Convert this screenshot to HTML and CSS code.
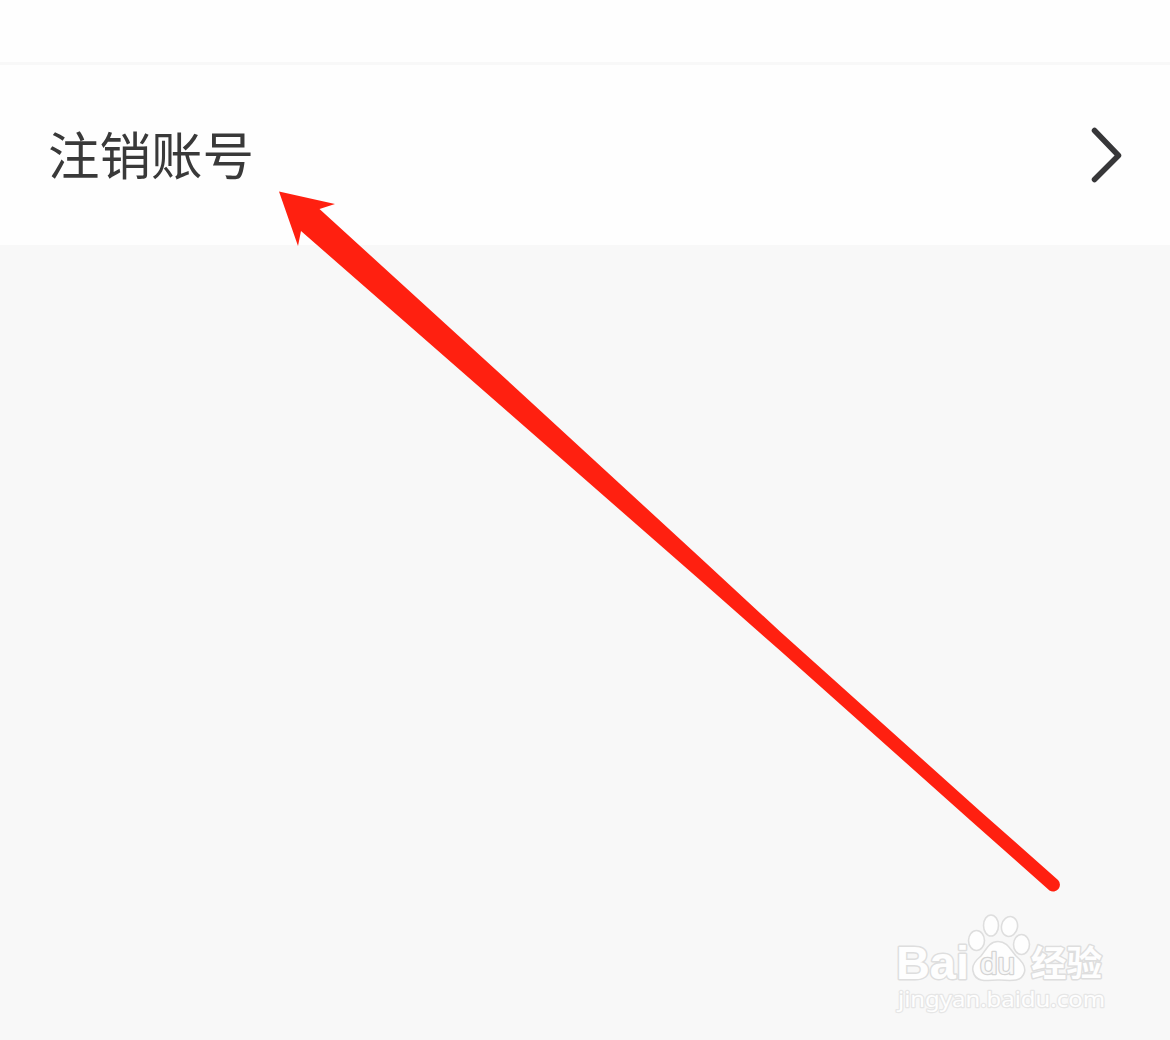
FILE: index.html
```
<!DOCTYPE html>
<html lang="zh-CN">
<head>
  <meta charset="UTF-8" />
  <title>注销账号</title>
  <link rel="stylesheet" href="styles.css">
</head>
<body>
  <div class="prev-row"></div>
  <div class="row">
    <span class="row-label">注销账号</span>
    <svg class="chevron" width="34" height="60" viewBox="0 0 34 60">
      <path d="M4.500 5.500 L28.500 30.500 L4.500 54.500" />
    </svg>
  </div>

  <!-- arrow pointing at the row -->
  <svg class="arrow" width="1170" height="1040" viewBox="0 0 1170 1040">
    <path d="M279 191.500 L335 204 L319.500 209 L507 380 L700 557.500 L780 631.500 L980 811 L1058 880 A6.800 6.800 0 0 1 1049.500 890.500 L970 820 L780 650.500 L700 580 L500 405 L301 231 L298 246 Z" />
  </svg>

  <svg class="watermark" width="240" height="130" viewBox="0 0 240 130">
    <g class="mark">
      <text class="brand" x="16" y="79" textLength="73" lengthAdjust="spacingAndGlyphs">Bai</text>
      <ellipse cx="96.500" cy="40.500" rx="8" ry="10" />
      <ellipse cx="111" cy="25.500" rx="7.500" ry="10.500" />
      <ellipse cx="129.500" cy="26.500" rx="8" ry="10" transform="rotate(12 129.500 26.500)" />
      <ellipse cx="141.500" cy="44.500" rx="8" ry="10" />
      <path d="M118 41.500 C127 41.500 130 49 136 56 C142 61 146 66 144.500 72 C142 82 132 81 118.500 80 C105 81 95 82 93 71 C91.500 65 96 60 101 56 C106 50 109 41.500 118 41.500 Z" />
      <text class="du" x="100" y="74" textLength="35" lengthAdjust="spacingAndGlyphs">du</text>
      <text class="jingyan" x="151" y="76" textLength="71" lengthAdjust="spacingAndGlyphs">经验</text>
    </g>
    <text class="site" x="18" y="107" textLength="207" lengthAdjust="spacingAndGlyphs">jingyan.baidu.com</text>
  </svg>
</body>
</html>
```
FILE: styles.css
```
body {
  margin: 0;
  height: 1040px;
  overflow: hidden;
  position: relative;
  background: #f8f8f8;
  font-family: "Noto Sans CJK SC", sans-serif;
}
.prev-row {
  height: 62px;
  background: #fefefe;
  border-bottom: 3px solid #f8f8f8;
}
.row {
  display: flex;
  align-items: center;
  justify-content: space-between;
  box-sizing: border-box;
  height: 180px;
  padding: 0 46px 0 48px;
  background: #fefefe;
}
.row-label {
  color: #393939;
  font-size: 51.5px;
  line-height: 60px;
  padding-bottom: 4px;
}
.chevron {
  fill: none;
  stroke: #373739;
  stroke-width: 5.5;
  stroke-linecap: round;
  stroke-linejoin: round;
}
.arrow {
  position: absolute;
  top: 0;
  left: 0;
  fill: #ff2010;
}
.watermark {
  position: absolute;
  left: 880px;
  top: 900px;
  fill: #fefefe;
  stroke: #dedede;
  stroke-width: 1.6;
}
.watermark text {
  paint-order: stroke;
  stroke-width: 3;
  stroke-linejoin: round;
}
.brand {
  font-family: "Liberation Sans", sans-serif;
  font-size: 46px;
  font-weight: bold;
}
.watermark .du {
  font-family: "Liberation Sans", sans-serif;
  font-size: 29px;
  fill: #f8f8f8;
  stroke: #d4d4d4;
  stroke-width: 2.4;
}
.jingyan {
  font-size: 35px;
  font-weight: bold;
}
.watermark .site {
  font-family: "Noto Sans", sans-serif;
  font-size: 22.5px;
  stroke: #e6e6e6;
  stroke-width: 2.4;
}
```
